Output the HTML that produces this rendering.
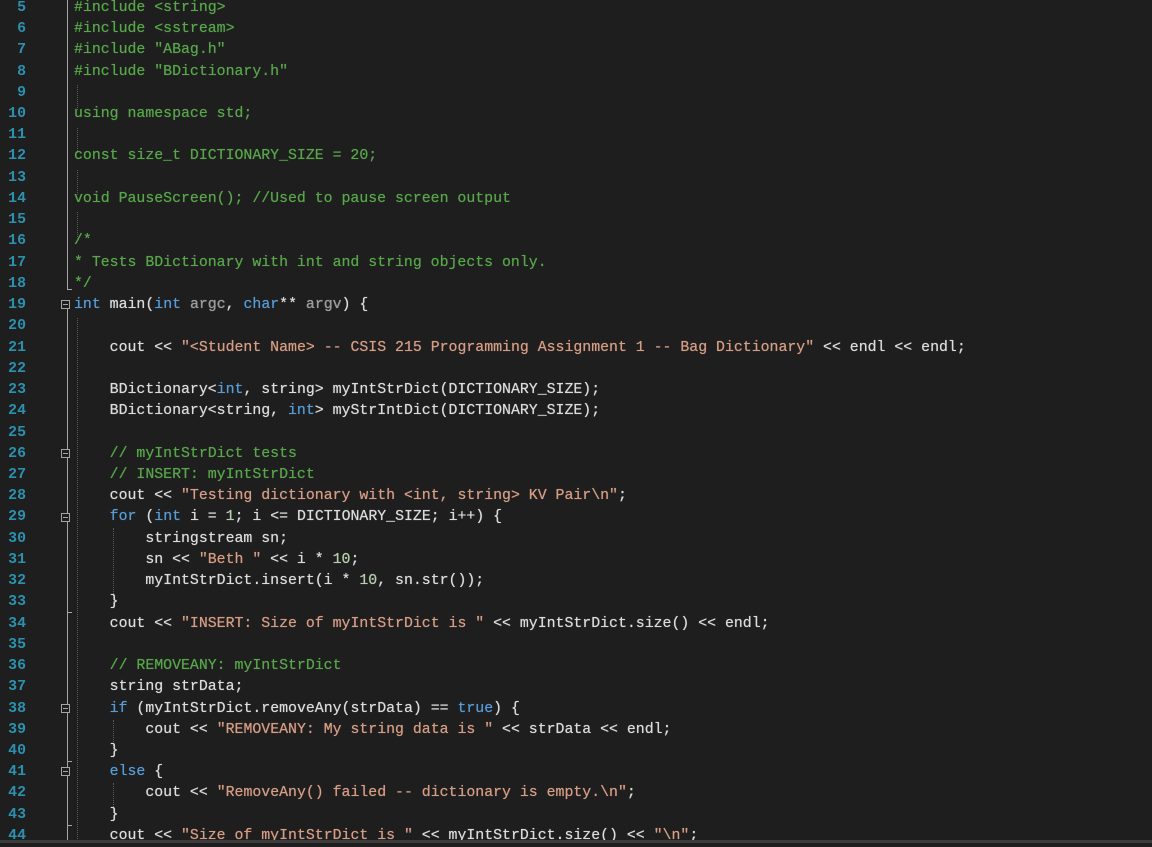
<!DOCTYPE html>
<html><head><style>
body{margin:0;width:1152px;height:843px;background:#1e1e1e;overflow:hidden;position:relative;font-family:"Liberation Mono",monospace;font-size:14.87px}
.ln{position:absolute;left:0;width:26px;text-align:right;color:#2b91af;font-weight:bold;top:-2.2px;line-height:21.23px;white-space:pre}
.code{position:absolute;left:74px;top:-2.2px;line-height:21.23px;white-space:pre;color:#dcdcdc;text-shadow:0 0 0.6px #dcdcdc}
.g{color:#57a64a;text-shadow:0 0 .6px #57a64a}.k{color:#569cd6;text-shadow:0 0 .6px #569cd6}.s{color:#d69d85;text-shadow:0 0 .6px #d69d85}.n{color:#b5cea8}.p{color:#9a9a9a}
.vl{position:absolute;left:67px;width:1px;background:#a5a5a5}
.fb{position:absolute;left:61px;width:9px;height:9px;border:1px solid #a5a5a5;background:#1e1e1e;box-sizing:border-box}
.fb:after{content:"";position:absolute;left:1px;top:3px;width:5px;height:1px;background:#a5a5a5}
.dg{position:absolute;width:0;border-left:1px dotted #5a5a5a}
.tk{position:absolute;left:67px;width:5px;height:1px;background:#a5a5a5}
</style></head><body>
<div class="ln">5
6
7
8
9
10
11
12
13
14
15
16
17
18
19
20
21
22
23
24
25
26
27
28
29
30
31
32
33
34
35
36
37
38
39
40
41
42
43
44</div>
<div class="vl" style="top:0;height:290px"></div>
<div class="tk" style="top:289px"></div>
<div class="vl" style="top:309px;height:534px"></div>
<div class="tk" style="top:612px"></div>
<div class="tk" style="top:761px"></div>
<div class="tk" style="top:825px"></div>
<div class="fb" style="top:300px"></div>
<div class="fb" style="top:449px"></div>
<div class="fb" style="top:513px"></div>
<div class="fb" style="top:704px"></div>
<div class="fb" style="top:767px"></div>
<div class="dg" style="left:77px;top:85px;height:25px"></div>
<div class="dg" style="left:77px;top:128px;height:25px"></div>
<div class="dg" style="left:77px;top:170px;height:25px"></div>
<div class="dg" style="left:77px;top:212px;height:25px"></div>
<div class="dg" style="left:77px;top:318px;height:525px"></div>
<div class="dg" style="left:113px;top:528px;height:80px"></div>
<div class="dg" style="left:113px;top:720px;height:30px"></div>
<div class="dg" style="left:113px;top:783px;height:30px"></div>
<div class="code"><span class="g">#include &lt;string&gt;
#include &lt;sstream&gt;
#include "ABag.h"
#include "BDictionary.h"

using namespace std;

const size_t DICTIONARY_SIZE = 20;

void PauseScreen(); //Used to pause screen output

/*
* Tests BDictionary with int and string objects only.
*/</span>
<span class="k">int</span> main(<span class="k">int</span> <span class="p">argc</span>, <span class="k">char</span>** <span class="p">argv</span>) {

    cout &lt;&lt; <span class="s">"&lt;Student Name&gt; -- CSIS 215 Programming Assignment 1 -- Bag Dictionary"</span> &lt;&lt; endl &lt;&lt; endl;

    BDictionary&lt;<span class="k">int</span>, string&gt; myIntStrDict(DICTIONARY_SIZE);
    BDictionary&lt;string, <span class="k">int</span>&gt; myStrIntDict(DICTIONARY_SIZE);

    <span class="g">// myIntStrDict tests</span>
    <span class="g">// INSERT: myIntStrDict</span>
    cout &lt;&lt; <span class="s">"Testing dictionary with &lt;int, string&gt; KV Pair\n"</span>;
    <span class="k">for</span> (<span class="k">int</span> i = <span class="n">1</span>; i &lt;= DICTIONARY_SIZE; i++) {
        stringstream sn;
        sn &lt;&lt; <span class="s">"Beth "</span> &lt;&lt; i * <span class="n">10</span>;
        myIntStrDict.insert(i * <span class="n">10</span>, sn.str());
    }
    cout &lt;&lt; <span class="s">"INSERT: Size of myIntStrDict is "</span> &lt;&lt; myIntStrDict.size() &lt;&lt; endl;

    <span class="g">// REMOVEANY: myIntStrDict</span>
    string strData;
    <span class="k">if</span> (myIntStrDict.removeAny(strData) == <span class="k">true</span>) {
        cout &lt;&lt; <span class="s">"REMOVEANY: My string data is "</span> &lt;&lt; strData &lt;&lt; endl;
    }
    <span class="k">else</span> {
        cout &lt;&lt; <span class="s">"RemoveAny() failed -- dictionary is empty.\n"</span>;
    }
    cout &lt;&lt; <span class="s">"Size of myIntStrDict is "</span> &lt;&lt; myIntStrDict.size() &lt;&lt; <span class="s">"\n"</span>;</div>
<div style="position:absolute;left:0;top:840px;width:1152px;height:3px;background:#3c3c3c"></div>
</body></html>
